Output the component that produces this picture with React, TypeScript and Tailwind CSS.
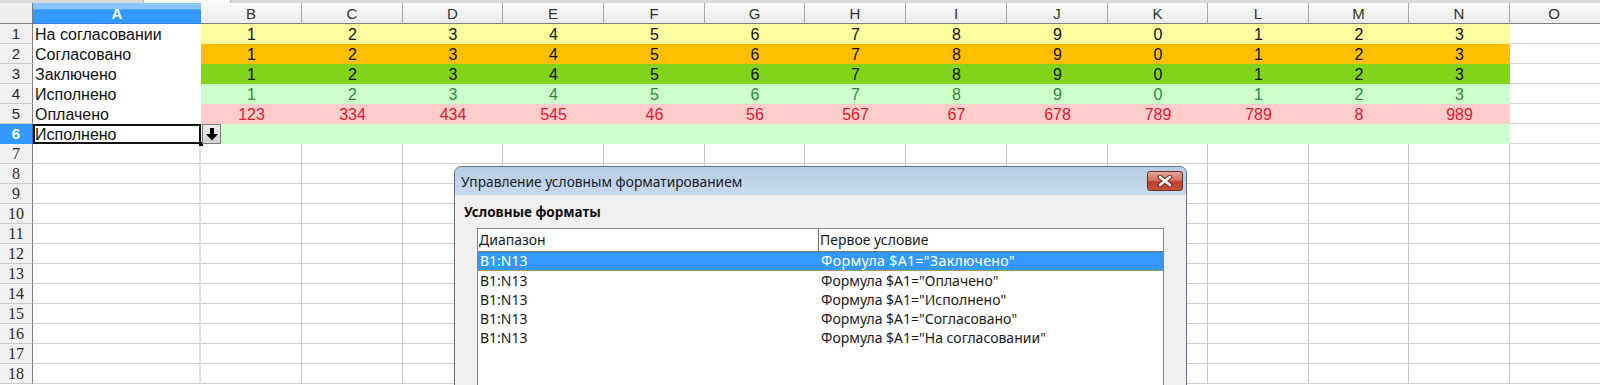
import React from 'react';

// widths for B..N so the borders land on the same pixels as the screenshot
const COLS = [
  { name: 'B', w: 'w-[101px]' },
  { name: 'C', w: 'w-[101px]' },
  { name: 'D', w: 'w-[100px]' },
  { name: 'E', w: 'w-[101px]' },
  { name: 'F', w: 'w-[101px]' },
  { name: 'G', w: 'w-[100px]' },
  { name: 'H', w: 'w-[101px]' },
  { name: 'I', w: 'w-[101px]' },
  { name: 'J', w: 'w-[101px]' },
  { name: 'K', w: 'w-[100px]' },
  { name: 'L', w: 'w-[101px]' },
  { name: 'M', w: 'w-[100px]' },
  { name: 'N', w: 'w-[101px]' },
];

const DIGITS = ['1', '2', '3', '4', '5', '6', '7', '8', '9', '0', '1', '2', '3'];

const ROWS = [
  { label: 'На согласовании', values: DIGITS, bg: 'bg-[#ffffa0]', text: 'text-[#111]' },
  { label: 'Согласовано', values: DIGITS, bg: 'bg-[#ffbf00]', text: 'text-[#111]' },
  { label: 'Заключено', values: DIGITS, bg: 'bg-[#81d41a]', text: 'text-[#111]' },
  { label: 'Исполнено', values: DIGITS, bg: 'bg-[#ccffcc]', text: 'text-[#2f8a3a]' },
  {
    label: 'Оплачено',
    values: ['123', '334', '434', '545', '46', '56', '567', '67', '678', '789', '789', '8', '989'],
    bg: 'bg-[#ffcccc]',
    text: 'text-[#dc1a2a]',
  },
];

const RULES = [
  'Формула $A1="Заключено"',
  'Формула $A1="Оплачено"',
  'Формула $A1="Исполнено"',
  'Формула $A1="Согласовано"',
  'Формула $A1="На согласовании"',
];

function RowHeader({ n, selected }: { n: number; selected?: boolean }) {
  if (selected) {
    return (
      <div className="w-[33px] shrink-0 h-full flex items-center justify-center bg-[#3399ff] border-r border-b border-r-[#2a6fc0] border-b-[#3399ff] text-white font-bold text-[15px]">
        {n}
      </div>
    );
  }
  return (
    <div
      className={
        'w-[33px] shrink-0 h-full flex items-center justify-center bg-[#f0f0f0] border-r border-b border-r-[#7f7f7f] border-b-[#c9c9c9] text-[#2b2b2b] ' +
        (n > 6 ? "font-['Liberation_Serif',serif] text-[16px]" : 'text-[15px]')
      }
    >
      {n}
    </div>
  );
}

function DropArrow() {
  return (
    <svg width="12" height="13" viewBox="0 0 12 13">
      <rect x="4" y="0" width="4" height="6" fill="#000" />
      <polygon points="0,6 12,6 6,12.5" fill="#000" />
    </svg>
  );
}

function CloseX() {
  return (
    <svg width="16" height="12" viewBox="0 0 16 12">
      <path d="M3 2 L13 10 M13 2 L3 10" stroke="#6b2a20" strokeWidth="4.6" strokeLinecap="round" />
      <path d="M3 2 L13 10 M13 2 L3 10" stroke="#fff" strokeWidth="2.6" strokeLinecap="round" />
    </svg>
  );
}

function Dialog() {
  return (
    <div className="absolute left-[454px] top-[166px] w-[733px] h-[240px] rounded-t-[7px] border border-[#5d6f86] bg-[#f0f0f0] overflow-hidden font-['Noto_Sans',sans-serif]">
      {/* title bar */}
      <div className="h-[28px] flex items-center justify-between pl-[6px] pr-[3px] bg-[linear-gradient(to_bottom,#b7cce6,#c6d9ee)]">
        <span className="text-[13.75px] text-[#1c1c1c] pt-[1px]">Управление условным форматированием</span>
        <div className="w-[36px] h-[20px] rounded-[3px] border border-[#6e3026] flex items-center justify-center bg-[linear-gradient(to_bottom,#e3a597_0%,#d27463_45%,#bf3e2c_55%,#c4513b_100%)]">
          <CloseX />
        </div>
      </div>

      <div className="mt-[8px] h-[19px] pl-[9px] flex items-center text-[13.5px] font-bold text-[#111]">Условные форматы</div>

      <div className="ml-[22px] mt-[6px] w-[687px] h-[200px] border border-[#828790] bg-white text-[14px] text-[#1a1a1a]">
        {/* list header */}
        <div className="h-[23px] flex border-b border-[#6f6f6f]">
          <div className="w-[341px] shrink-0 flex items-center pl-[1px] border-r border-[#6f6f6f]">Диапазон</div>
          <div className="flex-1 flex items-center pl-[1px]">Первое условие</div>
        </div>
        {RULES.map((rule, i) => (
          <div
            key={rule}
            className={
              'h-[19px] flex items-center ' +
              (i === 0 ? 'bg-[#3399ff] text-white border-b border-dotted border-[#d9a24f]' : '')
            }
          >
            <div className="w-[342px] shrink-0 pl-[2px]">B1:N13</div>
            <div className={'flex-1 pl-[1px] ' + (i === 0 ? 'tracking-[0.4px]' : '')}>{rule}</div>
          </div>
        ))}
      </div>
    </div>
  );
}

export default function App() {
  const emptyRows = Array.from({ length: 12 }, (_, i) => i + 7);

  return (
    <div className="relative w-[1600px] h-[385px] overflow-hidden bg-white font-['Liberation_Sans',Arial,sans-serif] text-[16px] leading-none">
      {/* strip above the column headers */}
      <div className="h-[3px] flex">
        <div className="w-[143px] bg-[#d8d8d8]" />
        <div className="w-[88px] bg-[#fbfbfb] border-x border-[#b8b8b8]" />
        <div className="flex-1 bg-[#d8d8d8]" />
      </div>

      {/* column headers */}
      <div className="h-[21px] flex text-[15px]">
        <div className="w-[33px] shrink-0 bg-[#efefef] border-r border-b border-[#7f7f7f]" />
        <div className="w-[168px] shrink-0 flex items-center justify-center text-white font-bold border-b border-[#3a7fd0] bg-[linear-gradient(to_bottom,#8ac4ff_0%,#8ac4ff_30%,#3399ff_34%,#3399ff_100%)]">
          A
        </div>
        {COLS.map((c) => (
          <div
            key={c.name}
            className={
              c.w +
              ' shrink-0 flex items-center justify-center text-[#333] border-r border-b border-r-[#a9a9a9] border-b-[#7f7f7f] bg-[linear-gradient(to_bottom,#f8f8f8,#ebebeb)]'
            }
          >
            {c.name}
          </div>
        ))}
        <div className="flex-1 flex items-center justify-center text-[#333] border-b border-[#7f7f7f] bg-[linear-gradient(to_bottom,#f8f8f8,#ebebeb)] pr-[2px]">
          O
        </div>
      </div>

      {/* rows 1-5 */}
      {ROWS.map((row, i) => (
        <div key={i} className="h-[20px] flex">
          <RowHeader n={i + 1} />
          <div className="w-[168px] shrink-0 flex items-center pl-[2px] pt-[2px] text-[#111]">{row.label}</div>
          {COLS.map((c, j) => (
            <div key={c.name} className={c.w + ' shrink-0 flex items-center justify-center pt-[2px] ' + row.bg + ' ' + row.text}>
              {row.values[j]}
            </div>
          ))}
          <div className="flex-1 border-b border-[#d6d6d6]" />
        </div>
      ))}

      {/* row 6 with selected cell */}
      <div className="h-[20px] flex">
        <RowHeader n={6} selected />
        <div className="relative w-[168px] shrink-0 flex items-center pl-[2px] pt-[2px] text-[#111]">
          Исполнено
          <div className="absolute left-0 top-0 w-[168px] h-[20px] border-2 border-[#111]" />
          <div className="absolute left-[166px] top-[18px] w-[4px] h-[4px] bg-black" />
          <div className="absolute left-[169px] top-0 w-[19px] h-[20px] z-10 flex items-center justify-center border border-[#7a7a7a] bg-[linear-gradient(to_bottom,#ececec,#d2d2d2)]">
            <DropArrow />
          </div>
        </div>
        {COLS.map((c) => (
          <div key={c.name} className={c.w + ' shrink-0 bg-[#ccffcc]'} />
        ))}
        <div className="flex-1 border-b border-[#d6d6d6]" />
      </div>

      {/* empty rows */}
      {emptyRows.map((n) => (
        <div key={n} className="h-[20px] flex">
          <RowHeader n={n} />
          <div className="w-[168px] shrink-0 border-r-2 border-b border-r-[#e2e2e2] border-b-[#cfcfcf]" />
          {COLS.map((c) => (
            <div key={c.name} className={c.w + ' shrink-0 border-r border-b border-r-[#c4c4c4] border-b-[#cfcfcf]'} />
          ))}
          <div className="flex-1 border-b border-[#cfcfcf]" />
        </div>
      ))}

      <Dialog />
    </div>
  );
}
